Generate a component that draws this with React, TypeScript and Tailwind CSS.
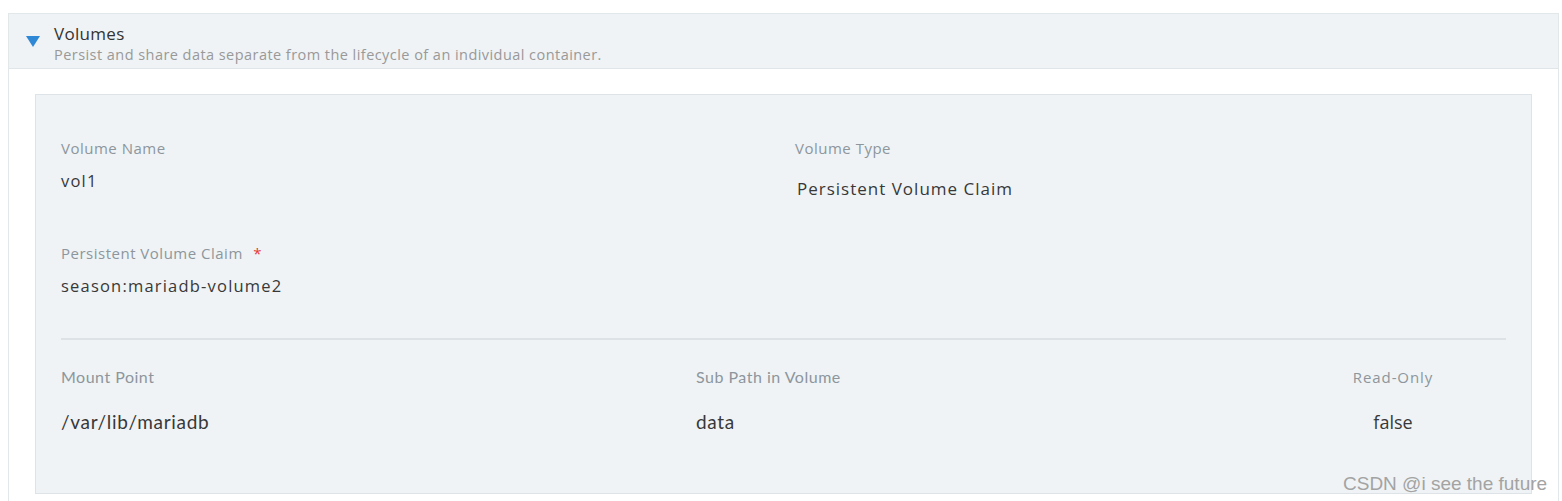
// Volumes section of a workload form, read-only view

const labelCls = 'text-[15px] leading-[20px] text-[#8d969d] tracking-[0.5px]';
const valueCls = 'text-[16.5px] leading-[24px] text-[#383838] tracking-[1.2px]';

export default function App() {
  return (
    <div className="relative min-h-[501px] bg-white pt-[13px] px-[8px] font-['Open_Sans',sans-serif]">
      <div className="w-[1551px] border border-[#e2e7ea] bg-white">
        {/* Header */}
        <div className="flex items-start h-[55px] bg-[#eff3f5] border-b border-[#dfe5e8]">
          <svg width="14" height="11" viewBox="0 0 14 11" className="mt-[22px] ml-[17px] shrink-0">
            <polygon points="0,0 14,0 7,11" fill="#2f88d6" />
          </svg>
          <div className="ml-[14px] mt-[9px]">
            <div className="text-[17px] leading-[22px] text-[#333] tracking-[0.3px]">Volumes</div>
            <div className="text-[14.5px] leading-[19px] text-[#999] tracking-[0.45px]">
              Persist and share data separate from the lifecycle of an individual container.
            </div>
          </div>
        </div>

        {/* Body */}
        <div className="pt-[25px] pl-[26px] pb-[26px]">
          <div className="w-[1497px] border border-[#dde3e6] bg-[#eff3f5] pt-[43px] px-[25px] pb-[58px]">
            <div className="grid grid-cols-[734px_1fr]">
              <div>
                <div className={labelCls}>Volume Name</div>
                <div className={`${valueCls} mt-[11px]`}>vol1</div>
              </div>
              <div>
                <div className={labelCls}>Volume Type</div>
                <div className="mt-[19px] ml-[2px] text-[17px] leading-[24px] text-[#383838] tracking-[1px]">
                  Persistent Volume Claim
                </div>
              </div>
            </div>

            <div className="mt-[42px]">
              <div className={labelCls}>
                Persistent Volume Claim <span className="ml-[6px] text-[#e53935]">*</span>
              </div>
              <div className={`${valueCls} mt-[11px]`}>season:mariadb-volume2</div>
            </div>

            <div className="mt-[40px] h-[2px] bg-[#dce2e5]" />

            <div className="mt-[27px] grid grid-cols-[635px_585px_224px] font-['Lato',sans-serif]">
              <div>
                <div className="text-[16px] leading-[20px] text-[#8d969d] tracking-[0.5px]">Mount Point</div>
                <div className="mt-[22px] text-[19px] leading-[26px] text-[#383838] tracking-[0.7px]">/var/lib/mariadb</div>
              </div>
              <div>
                <div className="text-[16px] leading-[20px] text-[#8d969d] tracking-[0.5px]">Sub Path in Volume</div>
                <div className="mt-[22px] text-[19px] leading-[26px] text-[#383838] tracking-[0.7px]">data</div>
              </div>
              <div className="text-center font-['Open_Sans',sans-serif]">
                <div className="text-[15px] leading-[20px] text-[#8d969d] tracking-[0.9px]">Read-Only</div>
                <div className="mt-[22px] text-[18px] leading-[26px] text-[#383838]">false</div>
              </div>
            </div>
          </div>
        </div>
      </div>

      {/* watermark */}
      <div className="absolute left-[1343px] top-[473px] text-[19px] leading-[22px] text-[#a3a3a3] font-['Liberation_Sans',sans-serif] whitespace-nowrap">
        CSDN @i see the future
      </div>
    </div>
  );
}
